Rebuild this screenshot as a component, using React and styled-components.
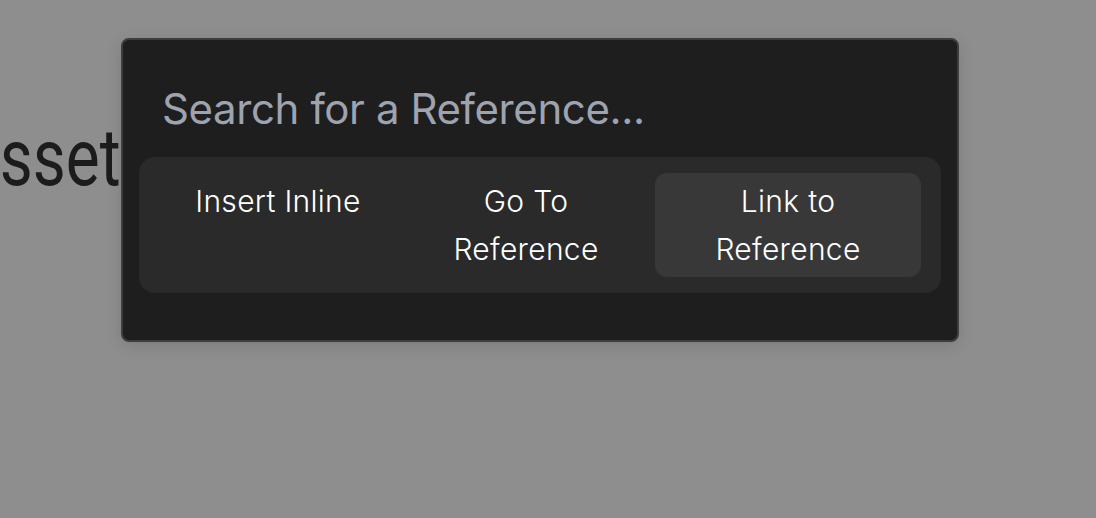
import React from "react";
import styled, { createGlobalStyle } from "styled-components";

const GlobalStyle = createGlobalStyle`
  html, body {
    margin: 0;
    padding: 0;
    background: #8e8e8e;
    font-family: Inter, Roboto, "Liberation Sans", sans-serif;
    overflow: hidden;
  }
  * { box-sizing: border-box; }
`;

const Page = styled.div`
  position: relative;
  width: 1096px;
  height: 518px;
  background: #8e8e8e;
  overflow: hidden;
`;

const Heading = styled.h1`
  margin: 0 0 0 -42px;
  padding-top: 113px;
  font-family: Roboto, "Liberation Sans", sans-serif;
  font-size: 80px;
  font-weight: 400;
  line-height: 90px;
  color: #1c1c1e;
  white-space: nowrap;
  transform: scaleX(0.8);
  transform-origin: left top;
`;

const Modal = styled.div`
  position: absolute;
  left: 121px;
  top: 38px;
  width: 838px;
  height: 304px;
  background: #1e1e1e;
  border: 2px solid #3d3d3d;
  border-radius: 8px;
  padding: 0 16px;
  box-shadow: 0 4px 16px rgba(0, 0, 0, 0.12);
`;

const SearchInput = styled.input`
  display: block;
  width: 100%;
  height: 117px;
  padding: 19px 0 0 23px;
  border: none;
  outline: none;
  background: transparent;
  font-family: Inter, Roboto, "Liberation Sans", sans-serif;
  font-size: 42px;
  font-weight: 400;
  letter-spacing: -0.4px;
  color: #ffffff;

  &::placeholder {
    color: #9da3af;
    opacity: 1;
  }
`;

const ActionGroup = styled.div`
  display: grid;
  grid-template-columns: 238px 258px 266px;
  padding: 16px 20px;
  background: #2a2a2a;
  border-radius: 16px;
`;

const ActionButton = styled.button`
  display: block;
  padding: 4px 24px;
  border: none;
  border-radius: 12px;
  background: ${(p) => (p.$active ? "#383838" : "transparent")};
  color: #ffffff;
  font-family: Inter, Roboto, "Liberation Sans", sans-serif;
  font-size: 30px;
  font-weight: 300;
  letter-spacing: 0.3px;
  line-height: 48px;
  text-align: center;
  align-self: start;
  cursor: pointer;
`;

export default function App() {
  return (
    <Page>
      <GlobalStyle />
      <Heading>Assets</Heading>
      <Modal>
        <SearchInput placeholder="Search for a Reference..." />
        <ActionGroup>
          <ActionButton>Insert Inline</ActionButton>
          <ActionButton>Go To Reference</ActionButton>
          <ActionButton $active>Link to Reference</ActionButton>
        </ActionGroup>
      </Modal>
    </Page>
  );
}
